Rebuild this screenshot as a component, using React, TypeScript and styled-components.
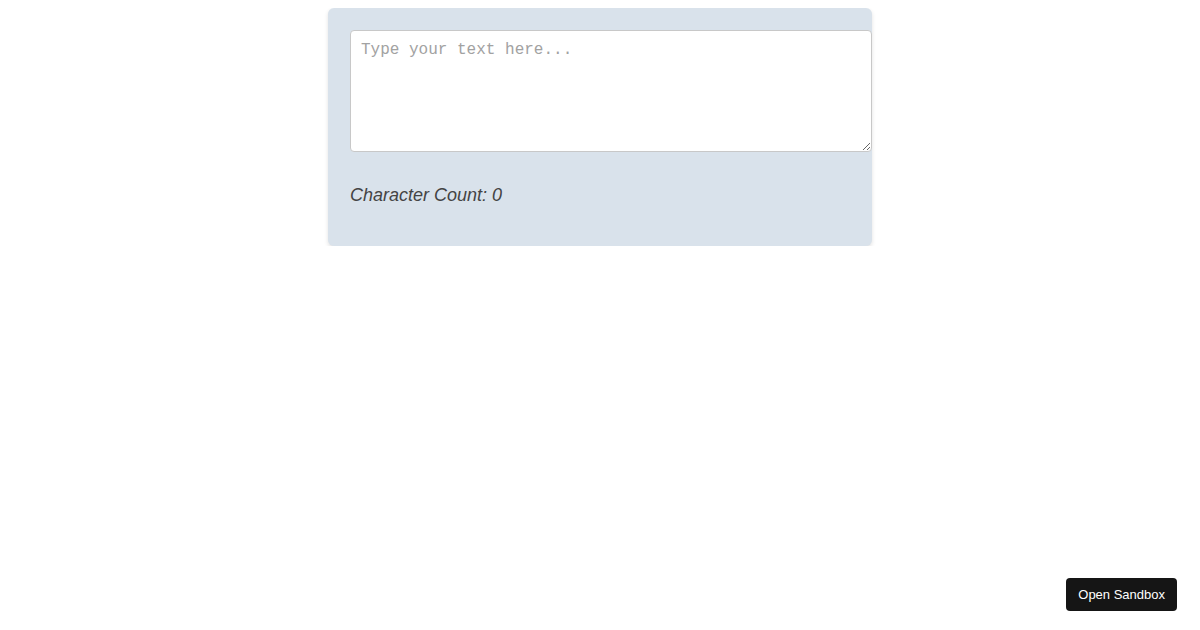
import React, { useState } from "react";
import styled, { createGlobalStyle } from "styled-components";

const Global = createGlobalStyle`
  html, body { margin: 0; padding: 0; background: #fff; }
  body { margin: 8px; font-family: "Liberation Sans", Arial, sans-serif; }
`;

const Card = styled.div`
  max-width: 500px;
  margin: 0 auto;
  padding: 22px;
  background: #d9e2eb;
  border-radius: 6px;
  box-shadow: 0 2px 4px rgba(0, 0, 0, 0.12);
`;

const TextArea = styled.textarea`
  display: block;
  width: 100%;
  height: 100px;
  padding: 10px;
  border: 1px solid #c8c8c8;
  border-radius: 4px;
  background: #fff;
  font-family: "Liberation Mono", "Courier New", monospace;
  font-size: 16px;
  color: #333;
  &::placeholder { color: #a2a2a2; }
`;

const Count = styled.p`
  margin: 33px 0 18px;
  font-family: "Liberation Sans", Arial, sans-serif;
  font-style: italic;
  font-size: 18px;
  color: #444;
`;

const SandboxButton = styled.button`
  position: fixed;
  right: 23px;
  bottom: 19px;
  height: 33px;
  padding: 0 12px;
  border: none;
  border-radius: 4px;
  background: #151515;
  color: #fff;
  font-family: "Liberation Sans", Arial, sans-serif;
  font-size: 13px;
`;

export default function App() {
  const [text, setText] = useState("");
  return (
    <>
      <Global />
      <Card>
        <TextArea
          placeholder="Type your text here..."
          value={text}
          onChange={(e) => setText(e.target.value)}
        />
        <Count>Character Count: {text.length}</Count>
      </Card>
      <SandboxButton>Open Sandbox</SandboxButton>
    </>
  );
}
